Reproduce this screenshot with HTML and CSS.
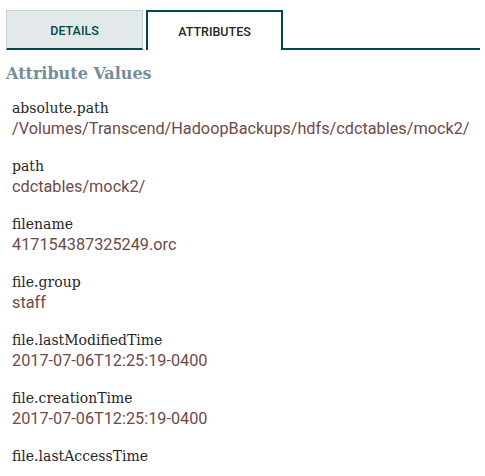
FILE: index.html
```html
<!DOCTYPE html>
<html>
<head>
<meta charset="utf-8">
<link rel="stylesheet" href="styles.css">
</head>
<body>
<div class="panel">
  <div class="tabs">
    <div class="tab">DETAILS</div>
    <div class="tab active">ATTRIBUTES</div>
    <div class="tab-fill"></div>
  </div>
  <h2 class="heading">Attribute Values</h2>
  <div class="attrs">
    <div class="attr"><div class="name">absolute.path</div><div class="value">/Volumes/Transcend/HadoopBackups/hdfs/cdctables/mock2/</div></div>
    <div class="attr"><div class="name">path</div><div class="value">cdctables/mock2/</div></div>
    <div class="attr"><div class="name">filename</div><div class="value">417154387325249.orc</div></div>
    <div class="attr"><div class="name">file.group</div><div class="value">staff</div></div>
    <div class="attr"><div class="name">file.lastModifiedTime</div><div class="value">2017-07-06T12:25:19-0400</div></div>
    <div class="attr"><div class="name">file.creationTime</div><div class="value">2017-07-06T12:25:19-0400</div></div>
    <div class="attr"><div class="name">file.lastAccessTime</div></div>
  </div>
</div>
</body>
</html>
```
FILE: styles.css
```css
html, body {
  margin: 0;
  padding: 0;
  background: #ffffff;
  overflow: hidden;
}
.panel {
  padding: 10px 5px 0 6px;
}
.tabs {
  display: flex;
  height: 40px;
}
.tab {
  box-sizing: border-box;
  width: 137px;
  display: flex;
  align-items: center;
  justify-content: center;
  font-family: Roboto, "Liberation Sans", sans-serif;
  font-weight: 500;
  font-size: 12.5px;
  color: #004849;
  background: #e3e8eb;
  border: 1px solid #c7d2d7;
  border-bottom: 2px solid #004849;
  margin-right: 3px;
  padding-top: 1px;
}
.tab.active {
  background: #ffffff;
  color: #262626;
  border: 2px solid #004849;
  border-bottom: none;
  margin-right: 0;
}
.tab-fill {
  flex: 1;
  border-bottom: 2px solid #004849;
}
.heading {
  margin: 13px 0 0 0;
  font-family: "DejaVu Serif", serif;
  font-weight: bold;
  font-size: 16px;
  line-height: 22px;
  color: #728e9b;
}
.attrs {
  padding-left: 6px;
  margin-top: 13px;
  height: 370px;
  overflow: hidden;
}
.attr {
  height: 58px;
}
.name {
  font-family: "DejaVu Serif", serif;
  font-size: 14px;
  line-height: 20px;
  color: #262626;
}
.value {
  font-family: Roboto, "Liberation Sans", sans-serif;
  font-weight: 400;
  font-size: 16.25px;
  line-height: 20px;
  color: #6f4a48;
  margin-top: 1px;
}
```
